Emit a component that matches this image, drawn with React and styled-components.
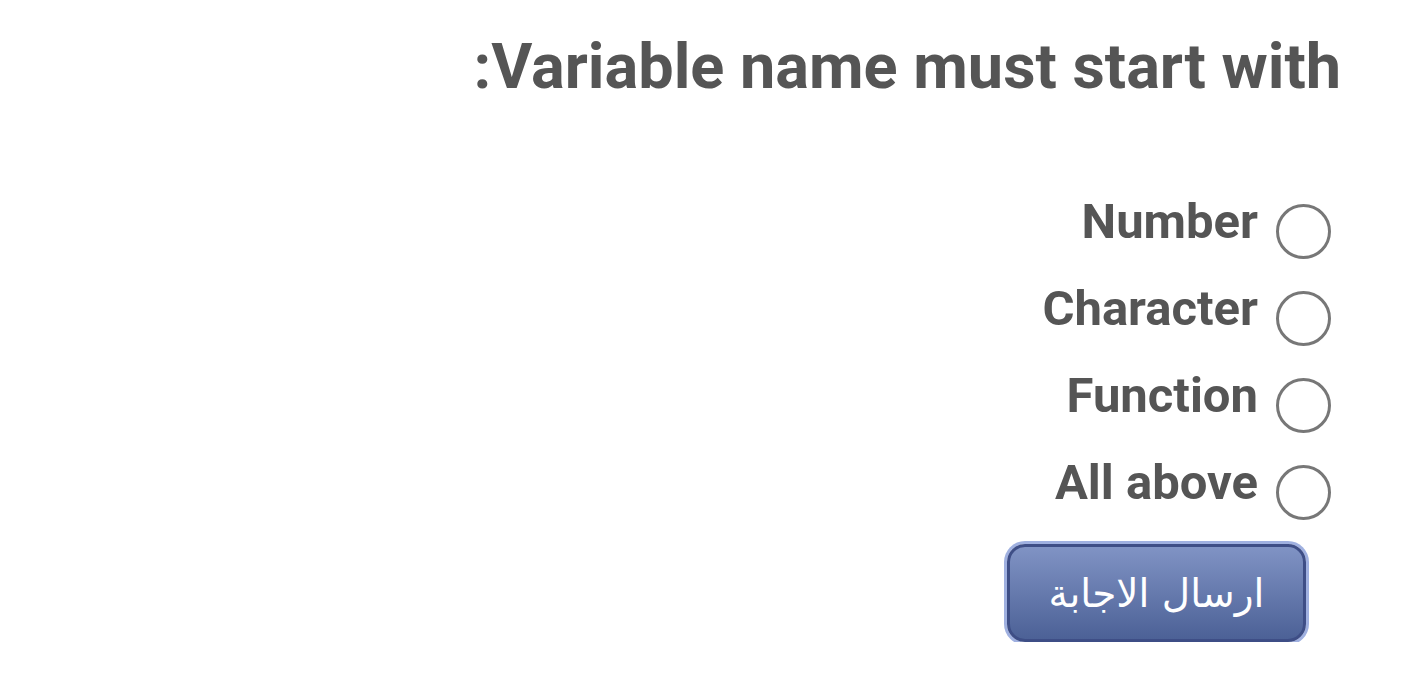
import styled, {createGlobalStyle} from 'styled-components';

const GlobalStyle=createGlobalStyle`
	body{
		margin:0;
		background:#fff;
		font-family:'Roboto',sans-serif;
	}
`
const Page=styled.div`
	direction:rtl;
	padding:22px 78px 0 0;
	color:#555;
`
const Title=styled.h1`
	margin:0 0 92px 0;
	font-size:63px;
	font-weight:700;
	line-height:90px;
`
const Options=styled.div`
	display:flex;
	flex-direction:column;
	gap:32px;
	padding-right:10px;
`
const Option=styled.label`
	display:flex;
	align-items:center;
	gap:18px;
	font-size:49px;
	font-weight:700;
	line-height:55px;
`
const Radio=styled.span`
	width:55px;
	height:55px;
	box-sizing:border-box;
	border:3px solid #777;
	border-radius:50%;
	flex-shrink:0;
`
const Text=styled.span`
	margin-top:-20px;
`
const Submit=styled.button`
	margin:24px 35px 0 0;
	width:299px;
	height:98px;
	box-sizing:border-box;
	border:3px solid #3e4e86;
	border-radius:18px;
	box-shadow:0 0 0 3px #9fb0e0;
	background:linear-gradient(#8093c4,#4c6196);
	color:#fff;
	font-family:'DejaVu Sans','Noto Sans',sans-serif;
	font-size:39px;
	cursor:pointer;
`

const answers=['Number','Character','Function','All above']

const App = () => {
	return (
		<Page>
			<GlobalStyle />
			<Title>Variable name must start with:</Title>
			<Options>
				{answers.map(a=>(
					<Option key={a}>
						<Radio />
						<Text>{a}</Text>
					</Option>
				))}
			</Options>
			<Submit>ارسال الاجابة</Submit>
		</Page>
	)
}

export default App
